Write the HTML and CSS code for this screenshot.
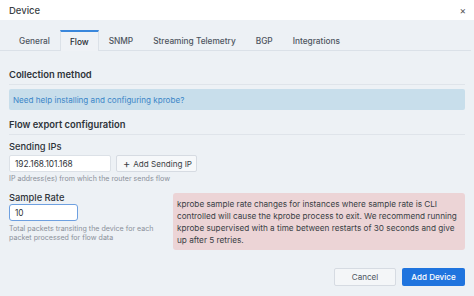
FILE: index.html
```html
<!DOCTYPE html>
<html>
<head>
<meta charset="utf-8">
<link rel="stylesheet" href="styles.css">
</head>
<body>
<div class="modal">
  <div class="header">
    <span class="title">Device</span>
    <span class="close">×</span>
  </div>
  <div class="tabs">
    <div class="tab">General</div>
    <div class="tab active">Flow</div>
    <div class="tab">SNMP</div>
    <div class="tab">Streaming Telemetry</div>
    <div class="tab">BGP</div>
    <div class="tab">Integrations</div>
  </div>
  <div class="body">
    <div class="section-title">Collection method</div>
    <div class="info">Need help installing and configuring kprobe?</div>
    <div class="section-title">Flow export configuration</div>
    <div class="field">
      <div class="label">Sending IPs</div>
      <div class="row">
        <div class="input ip">192.168.101.168</div>
        <div class="btn add"><span class="plus">+</span> Add Sending IP</div>
      </div>
      <div class="help">IP address(es) from which the router sends flow</div>
    </div>
    <div class="split">
      <div class="field rate">
        <div class="label">Sample Rate</div>
        <div class="input focus">10</div>
        <div class="help">Total packets transiting the device for each packet processed for flow data</div>
      </div>
      <div class="alert">kprobe sample rate changes for instances where sample rate is CLI controlled will cause the kprobe process to exit. We recommend running kprobe supervised with a time between restarts of 30 seconds and give up after 5 retries.</div>
    </div>
  </div>
  <div class="footer">
    <div class="btn cancel">Cancel</div>
    <div class="btn primary">Add Device</div>
  </div>
</div>
</body>
</html>
```

FILE: styles.css
```css
* { box-sizing: border-box; }
html, body { margin: 0; padding: 0; }
body {
  font-family: Inter, "Noto Sans", sans-serif;
  color: #333a42;
  background: #edf1f5;
}
.modal {
  width: 474px;
  height: 296px;
  display: flex;
  flex-direction: column;
  background: #edf1f5;
  overflow: hidden;
}
.header {
  flex-shrink: 0;
  height: 20px;
  background: #ffffff;
  display: flex;
  align-items: center;
  justify-content: space-between;
  padding: 0 8px 0 9px;
}
.title { font-size: 9.5px; font-weight: 500; color: #3a3f45; }
.close { font-size: 10px; color: #555; }
.tabs {
  flex-shrink: 0;
  display: flex;
  padding: 10px 9px 0;
  height: 31px;
  border-bottom: 1px solid #dbe1e8;
  margin-right: 3px;
}
.tab {
  padding: 0 10px;
  height: 20px;
  display: flex;
  align-items: center;
  font-size: 8.3px;
  font-weight: 500;
  color: #4d5560;
  border-top: 2px solid transparent;
}
.tab.active {
  border-top: 2px solid #3a87dc;
  border-left: 1px solid #dbe1e8;
  border-right: 1px solid #dbe1e8;
  background: #eff2f6;
  color: #2a2f35;
  height: 21px;
  margin-bottom: -1px;
  padding: 0 9px;
}
.body {
  flex: 1;
  min-height: 0;
  padding: 18px 9px 0 9px;
}
.section-title {
  font-size: 9.4px;
  font-weight: 600;
  color: #2e3339;
  padding-bottom: 3px;
  border-bottom: 1px solid #dfe4ea;
  line-height: 12px;
}
.info {
  margin-top: 4px;
  margin-bottom: 9px;
  height: 21px;
  display: flex;
  align-items: center;
  padding: 0 4px;
  background: #c8deeb;
  border-radius: 2px;
  color: #3c86c8;
  font-size: 8.1px;
}
.field { margin-top: 7px; }
.label { font-size: 9.3px; font-weight: 500; color: #2e3339; line-height: 10px; }
.row { display: flex; gap: 5px; margin-top: 3px; }
.input {
  height: 17px;
  background: #fff;
  border: 1px solid #dce1e7;
  border-radius: 2px;
  font-size: 8.3px;
  padding: 0 5px;
  display: flex;
  align-items: center;
  color: #2e3339;
}
.ip { width: 102px; }
.btn {
  height: 18px;
  display: flex;
  align-items: center;
  justify-content: center;
  border-radius: 2px;
  font-size: 8.1px;
}
.add {
  width: 81px;
  height: 17px;
  background: #f6f8fa;
  border: 1px solid #d6dbe2;
  color: #3a3f45;
  padding-left: 2px;
}
.plus { font-size: 11px; margin-right: 3px; line-height: 10px; }
.help { font-size: 7.1px; color: #8a9099; margin-top: 2px; line-height: 9px; }
.split { display: flex; justify-content: space-between; align-items: flex-start; margin-top: 10px; }
.rate { width: 150px; margin-top: 0; }
.rate .input { margin-top: 1px; }
.focus {
  width: 69px;
  height: 17px;
  border: 1.5px solid #6ea0e0;
  border-radius: 3px;
}
.rate .help { margin-top: 3px; }
.alert {
  width: 292px;
  background: #ecd4d6;
  border-radius: 3px;
  padding: 5px 0 4px 4px;
  font-size: 8.2px;
  line-height: 12px;
  color: #3a3f45;
}
.footer {
  flex-shrink: 0;
  display: flex;
  justify-content: flex-end;
  gap: 6px;
  padding: 0 9px 10px;
}
.cancel {
  width: 62px;
  height: 18px;
  background: #f4f6f8;
  border: 1px solid #d6dbe2;
  color: #4d5560;
}
.primary {
  width: 63px;
  height: 18px;
  background: #1f74de;
  color: #fff;
  font-weight: 500;
}
```
